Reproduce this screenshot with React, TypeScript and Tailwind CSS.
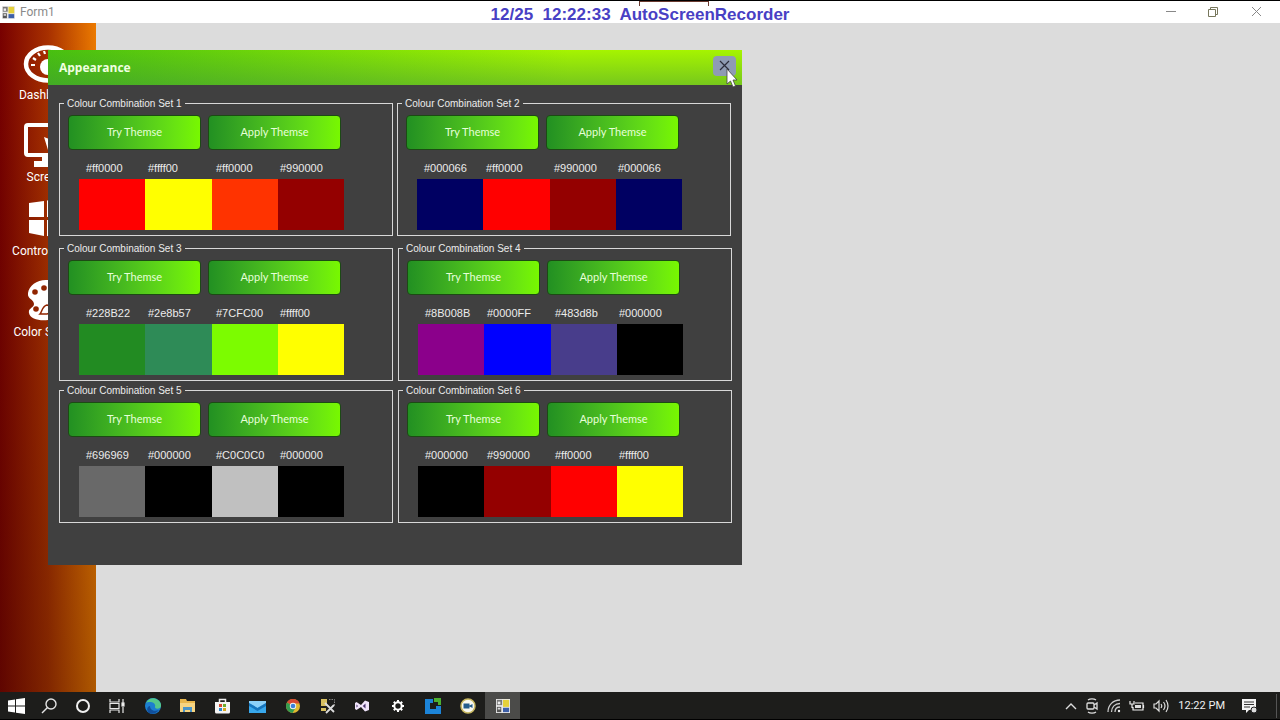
import type { ReactNode } from "react";

type ColourSet = {
  title: string;
  colours: { label: string; fill: string }[];
};

const ROWS: { className: string; sets: ColourSet[] }[] = [
  {
    className: "gap-1 mb-1 w-[672px]",
    sets: [
      {
        title: "Colour Combination Set 1",
        colours: [
          { label: "#ff0000", fill: "#ff0000" },
          { label: "#ffff00", fill: "#ffff00" },
          { label: "#ff0000", fill: "#ff3300" },
          { label: "#990000", fill: "#940000" },
        ],
      },
      {
        title: "Colour Combination Set 2",
        colours: [
          { label: "#000066", fill: "#000062" },
          { label: "#ff0000", fill: "#ff0000" },
          { label: "#990000", fill: "#940000" },
          { label: "#000066", fill: "#000062" },
        ],
      },
    ],
  },
  {
    className: "gap-[5px] mb-px w-[673px]",
    sets: [
      {
        title: "Colour Combination Set 3",
        colours: [
          { label: "#228B22", fill: "#228b22" },
          { label: "#2e8b57", fill: "#2e8b57" },
          { label: "#7CFC00", fill: "#7cfc00" },
          { label: "#ffff00", fill: "#ffff00" },
        ],
      },
      {
        title: "Colour Combination Set 4",
        colours: [
          { label: "#8B008B", fill: "#8b008b" },
          { label: "#0000FF", fill: "#0000ff" },
          { label: "#483d8b", fill: "#483d8b" },
          { label: "#000000", fill: "#000000" },
        ],
      },
    ],
  },
  {
    className: "gap-[5px] w-[673px]",
    sets: [
      {
        title: "Colour Combination Set 5",
        colours: [
          { label: "#696969", fill: "#696969" },
          { label: "#000000", fill: "#000000" },
          { label: "#C0C0C0", fill: "#c0c0c0" },
          { label: "#000000", fill: "#000000" },
        ],
      },
      {
        title: "Colour Combination Set 6",
        colours: [
          { label: "#000000", fill: "#000000" },
          { label: "#990000", fill: "#940000" },
          { label: "#ff0000", fill: "#ff0000" },
          { label: "#ffff00", fill: "#ffff00" },
        ],
      },
    ],
  },
];

function ThemeButton({ children }: { children: ReactNode }) {
  return (
    <button
      type="button"
      className="h-[35px] w-[133px] rounded border border-[#1c4a14] bg-linear-to-r from-[#229022] to-[#78f800] font-[Lato,sans-serif] text-[11px] text-[#e6ffd8]"
    >
      {children}
    </button>
  );
}

function ColourGroup({ set }: { set: ColourSet }) {
  return (
    <fieldset className="h-[141px] border border-[#d8d8d8] pl-2">
      <legend className="-ml-1 px-[3px] pt-0.5 text-[10px] leading-[14px]">
        {set.title}
      </legend>
      <div className="mt-1 flex gap-[7px]">
        <ThemeButton>Try Themse</ThemeButton>
        <ThemeButton>Apply Themse</ThemeButton>
      </div>
      <div className="ml-[11px] mt-[11px] grid grid-cols-[62px_68px_64px_1fr] pl-[7px] text-[11px] leading-[14px]">
        {set.colours.map((c, i) => (
          <span key={i}>{c.label}</span>
        ))}
      </div>
      <div className="ml-[11px] mt-1 grid h-[51px] w-[265px] grid-cols-4">
        {set.colours.map((c, i) => (
          <div key={i} style={{ backgroundColor: c.fill }} />
        ))}
      </div>
    </fieldset>
  );
}

function FormIcon({ size }: { size: number }) {
  return (
    <svg width={size} height={size} viewBox="0 0 16 16">
      <rect width="16" height="16" fill="#e8e8e8" />
      <rect x="1" y="1" width="6" height="6" fill="#777" />
      <rect x="2" y="3" width="3" height="3" fill="#eee" />
      <rect x="8" y="1" width="7" height="8" fill="#e4d03a" />
      <rect x="1" y="9" width="5" height="6" fill="#555" />
      <rect x="2" y="10" width="3" height="2" fill="#ddd" />
      <rect x="8" y="10" width="7" height="5" fill="#3d5fa8" />
    </svg>
  );
}

function Sidebar() {
  return (
    <nav className="flex w-24 shrink-0 flex-col items-center bg-[linear-gradient(to_bottom,transparent,#28100050),linear-gradient(to_right,#780000,#a83000_50%,#ec7a00)] font-[Roboto,sans-serif] text-[12px] leading-4 text-white">
      <a href="#dashboard" className="mt-[22px] flex flex-col items-center gap-1">
        <svg width="50" height="38" viewBox="0 0 50 38" fill="none" stroke="#fff">
          <ellipse cx="25" cy="19" rx="22" ry="16.500" strokeWidth="4.500" />
          <path d="M8 20h4M10 13l3 2M15 8l2 3M21 6l1 3M33 7l-2 4M39 12l-4 2" strokeWidth="2.200" />
          <circle cx="25" cy="22" r="8" fill="#fff" stroke="none" />
          <path d="M25 22l9-10" strokeWidth="3" />
        </svg>
        Dashboard
      </a>
      <a href="#screens" className="mt-5 flex flex-col items-center gap-px">
        <svg width="48" height="45" viewBox="0 0 48 45">
          <rect x="2" y="2" width="44" height="30" rx="2" fill="none" stroke="#fff" strokeWidth="4" />
          <path d="M18 32h12v6h4v6H10v-6h8z" fill="#fff" />
          <path d="M20 14l13 5-6 2-3 6z" fill="#fff" />
        </svg>
        Screens
      </a>
      <a href="#control-panel" className="mt-3.5 flex flex-col items-center gap-1.5">
        <svg width="38" height="38" viewBox="0 0 38 38" fill="#fff">
          <path d="M0 4l15-2v16H0zM18 1.500l20-2v18.500H18zM0 21h15v16L0 34zM18 21h20v19l-20-3z" />
        </svg>
        Control Panel
      </a>
      <a href="#color-setting" className="mt-5 flex flex-col items-center gap-[3px]">
        <svg width="40" height="42" viewBox="0 0 40 42">
          <path
            d="M20 1C10 0 1 6 0 14c-1 6 6 6 6 11 0 4-6 4-5 9 1 6 10 8 19 7 12-1 20-10 20-21C40 9 31 1 20 1z"
            fill="#fff"
          />
          <g fill="#902400">
            <circle cx="7" cy="13" r="2.800" />
            <circle cx="16" cy="9" r="2.800" />
            <circle cx="26" cy="10" r="2.800" />
            <circle cx="8" cy="30" r="2.800" />
          </g>
          <path d="M12 35c2-2 2-8 7-9 5 1 5 8 0 9z" fill="none" stroke="#902400" strokeWidth="1.500" />
        </svg>
        Color Setting
      </a>
    </nav>
  );
}

function TitleBar() {
  return (
    <header className="grid h-[23px] grid-cols-[1fr_auto_1fr] items-center border-t border-black bg-white">
      <div className="flex items-center gap-[5px] pl-0.5 font-[Roboto,sans-serif] text-[12px] leading-4 text-[#8a8a8a]">
        <FormIcon size={13} />
        Form1
      </div>
      <p className="relative whitespace-pre px-1 pt-1.5 font-['Liberation_Sans',sans-serif] text-[17px] font-bold leading-4 text-[#4840c4]">
        <span className="absolute left-[152px] top-0 h-[5px] w-[70px] border-x border-t border-[#6b3a30]" />
        12/25  12:22:33  AutoScreenRecorder
      </p>
      <div className="flex justify-end pr-0.5 text-[#888]">
        <button type="button" aria-label="Minimize" className="flex w-[43px] justify-center">
          <svg width="11" height="11" stroke="currentColor">
            <path d="M1 4.500h10" />
          </svg>
        </button>
        <button type="button" aria-label="Restore" className="flex w-[43px] justify-center text-[#77775c]">
          <svg width="11" height="11" fill="none" stroke="currentColor">
            <path d="M.5 2.500h7v7h-7zM2.500 2.500v-2h7v7h-2" />
          </svg>
        </button>
        <button type="button" aria-label="Close" className="flex w-[43px] justify-center">
          <svg width="11" height="11" stroke="currentColor">
            <path d="M1 0l9 9M10 0l-9 9" />
          </svg>
        </button>
      </div>
    </header>
  );
}

function AppearanceDialog() {
  return (
    <section
      role="dialog"
      aria-labelledby="appearance-title"
      className="absolute left-12 top-[27px] h-[515px] w-[694px] bg-[#404040] font-['Liberation_Sans',sans-serif] text-[#ececec]"
    >
      <div className="flex h-[35px] items-center justify-between bg-[linear-gradient(to_bottom,transparent,#3a904070),linear-gradient(to_right,#48c010,#a6f400_75%)] pl-[11px] pr-1.5">
        <h1 id="appearance-title" className="font-['Open_Sans',sans-serif] text-[12px] font-bold text-[#f0ffe0]">
          Appearance
        </h1>
        <button
          type="button"
          aria-label="Close appearance"
          className="mb-1 flex h-5 w-[23px] items-center justify-center rounded bg-[#8f9bb4]"
        >
          <svg width="11" height="11" stroke="#2c2c3c" strokeWidth="1.200">
            <path d="M1 1l9 9M10 1l-9 9" />
          </svg>
        </button>
      </div>
      <div className="pl-[11px] pt-2.5">
        {ROWS.map((row, i) => (
          <div key={i} className={`grid grid-cols-2 ${row.className}`}>
            {row.sets.map((set) => (
              <ColourGroup key={set.title} set={set} />
            ))}
          </div>
        ))}
      </div>
      {/* mouse pointer */}
      <svg className="absolute right-1 top-[18px]" width="12" height="20" viewBox="0 0 12 20">
        <path d="M1 1v15l3.500-3 2.500 6 2.500-1-2.500-6H11z" fill="#fff" stroke="#444" strokeWidth=".8" />
      </svg>
    </section>
  );
}

const APPS: { name: string; icon: ReactNode }[] = [
  {
    name: "Edge",
    icon: (
      <svg width="16" height="16" viewBox="0 0 16 16">
        <circle cx="8" cy="8" r="8" fill="#1c7fd0" />
        <path d="M1 5C3 0 9-1 13 2c3 2 4 6 2 8-2 1-5 1-5-1 1-3-2-5-5-5-2 0-3 0-4 1z" fill="#54c88c" />
        <path d="M5 8c0 4 4 6 9 4-3 4-8 5-11 2-2-3 0-6 2-6z" fill="#104f9c" />
      </svg>
    ),
  },
  {
    name: "File Explorer",
    icon: (
      <svg width="17" height="15" viewBox="0 0 17 15">
        <path d="M1 1h6l1 2h8v11H1z" fill="#e8b64c" />
        <path d="M1 5h15v9H1z" fill="#f6d482" />
        <path d="M4 9h9v5h-2v-2H6v2H4z" fill="#4a94c8" />
      </svg>
    ),
  },
  {
    name: "Microsoft Store",
    icon: (
      <svg width="15" height="16" viewBox="0 0 15 16">
        <path d="M4.500 5V1.500h6V5" fill="none" stroke="#eee" strokeWidth="1.500" />
        <path d="M0 4h15v10a1.500 1.500 0 01-1.500 1.500h-12A1.500 1.500 0 010 14z" fill="#f4f4f4" />
        <rect x="4" y="6" width="3" height="3" fill="#d8482c" />
        <rect x="8" y="6" width="3" height="3" fill="#6cac2c" />
        <rect x="4" y="10" width="3" height="3" fill="#2c88cc" />
        <rect x="8" y="10" width="3" height="3" fill="#d8a820" />
      </svg>
    ),
  },
  {
    name: "Mail",
    icon: (
      <svg width="17" height="14" viewBox="0 0 17 14">
        <path d="M0 2h17v12H0z" fill="#38a8ec" />
        <path d="M0 2h17v2l-8.500 5L0 4z" fill="#8cd0f8" />
        <path d="M0 4l8.500 5L17 4v3l-8.500 5L0 7z" fill="#1674bc" />
      </svg>
    ),
  },
  {
    name: "Chrome",
    icon: (
      <svg width="14" height="14" viewBox="0 0 14 14">
        <circle cx="7" cy="7" r="7" fill="#e0b830" />
        <path d="M7 7L1 3.500A7 7 0 0113.500 4.500H7z" fill="#d84834" />
        <path d="M7 7L1 3.500A7 7 0 006.500 14L10 8z" fill="#349c50" />
        <circle cx="7" cy="7" r="3.200" fill="#f4f4f4" />
        <circle cx="7" cy="7" r="2.300" fill="#3c80dc" />
      </svg>
    ),
  },
  {
    name: "Snipping tools",
    icon: (
      <svg width="16" height="16" viewBox="0 0 16 16" fill="none">
        <path d="M1 1h6v7H1zM1 10h5v3H1z" fill="#d8c060" />
        <path d="M9 1.500h5.500V8" stroke="#888" strokeDasharray="1.500 1" />
        <path d="M5 5l9 9M14 7l-8 8" stroke="#ddd" strokeWidth="1.800" />
      </svg>
    ),
  },
  {
    name: "Visual Studio",
    icon: (
      <svg width="15" height="14" viewBox="0 0 15 14">
        <path d="M0 4l1.500-1L6 6l4-4.500L14 3v8l-4 1.500L6 8l-4.500 3L0 10z" fill="#f0e4fa" />
        <path d="M10.500 4.500v5L7.800 7zM1.500 5.500v3L3 7z" fill="#47306a" />
      </svg>
    ),
  },
  {
    name: "Settings",
    icon: (
      <svg width="14" height="14" viewBox="0 0 14 14" fill="none" stroke="#fff">
        <circle cx="7" cy="7" r="3.700" strokeWidth="2" />
        <path
          d="M7 1v2M7 11v2M1 7h2M11 7h2M2.800 2.800l1.400 1.400M9.800 9.800l1.400 1.400M11.200 2.800L9.800 4.200M4.200 9.800l-1.400 1.400"
          strokeWidth="2"
        />
      </svg>
    ),
  },
  {
    name: "CL",
    icon: (
      <svg width="16" height="16" viewBox="0 0 16 16">
        <path d="M0 1h8v4H5v6h6V8h5v8H0z" fill="#1c84d8" />
        <path d="M9 0h7v7h-3V4H9z" fill="#4cb030" />
      </svg>
    ),
  },
  {
    name: "Screen Recorder",
    icon: (
      <svg width="16" height="16" viewBox="0 0 16 16">
        <circle cx="8" cy="8" r="7" fill="#f8f8f0" stroke="#c8b860" strokeWidth="1.500" />
        <path d="M3.500 5.500h6v2l3-1.500v4l-3-1.500v2h-6z" fill="#245c8c" />
      </svg>
    ),
  },
];

function Taskbar() {
  return (
    <footer className="flex h-7 items-stretch border-b border-black bg-[#1d1d1b] text-white">
      <button type="button" aria-label="Start" className="flex w-8 items-center justify-center">
        <svg width="17" height="16" viewBox="0 0 17 16" fill="#fff">
          <path d="M0 2.500l7-1v6H0zM8 1.300L17 0v7.500H8zM0 8.500h7v6l-7-1zM8 8.500h9V16l-9-1.300z" />
        </svg>
      </button>
      <button type="button" aria-label="Search" className="flex w-[34px] items-center justify-center">
        <svg width="16" height="16" viewBox="0 0 16 16" fill="none" stroke="#e4e4e4" strokeWidth="1.400">
          <circle cx="10" cy="6" r="5" />
          <path d="M6.500 9.500L1 15" />
        </svg>
      </button>
      <button type="button" aria-label="Cortana" className="flex w-[34px] items-center justify-center">
        <svg width="16" height="16" viewBox="0 0 16 16">
          <circle cx="8" cy="8" r="6" fill="none" stroke="#f0f0f0" strokeWidth="2" />
        </svg>
      </button>
      <button type="button" aria-label="Task view" className="flex w-[34px] items-center justify-center">
        <svg width="16" height="16" viewBox="0 0 16 16" fill="none" stroke="#e8e8e8" strokeWidth="1.200">
          <path d="M1 1v3h9V1M1 15v-3h9v3M1 5.500h9v5H1zM14 1v4M14 9v6" />
          <rect x="13" y="5" width="2" height="3" fill="#fff" />
        </svg>
      </button>
      <div className="ml-px flex">
        {APPS.map((app) => (
          <button
            key={app.name}
            type="button"
            aria-label={app.name}
            className="flex w-[35px] items-center justify-center"
          >
            {app.icon}
          </button>
        ))}
        <button type="button" aria-label="Form1" className="flex w-[35px] items-center justify-center bg-[#4b4b49]">
          <FormIcon size={14} />
        </button>
      </div>

      {/* tray */}
      <div className="ml-auto flex items-center gap-2">
        <svg width="12" height="8" fill="none" stroke="#ddd" strokeWidth="1.400">
          <path d="M1 7l5-5 5 5" />
        </svg>
        <svg width="14" height="16" viewBox="0 0 14 16" fill="none" stroke="#ddd" strokeWidth="1.300">
          <rect x="2" y="5" width="7" height="6" rx="1" />
          <path d="M9 7l3-2v6l-3-2M3 2c2-1.500 6-1.500 8 0M3 14c2 1.500 6 1.500 8 0" />
        </svg>
        <svg width="14" height="14" viewBox="0 0 14 14" fill="none" stroke="#ccc" strokeWidth="1.300">
          <path d="M1 13C1 6 6 1 13 1M4.500 13c0-5 3.500-8.500 8.500-8.500M8 13c0-3 2-5 5-5" />
          <circle cx="12" cy="12" r="1.200" fill="#eee" stroke="none" />
        </svg>
        <svg width="16" height="12" viewBox="0 0 16 12" fill="none" stroke="#eee" strokeWidth="1.200">
          <path d="M6 3h8v7H4V7M14.500 5v3M1 1v3h4V1M3 4v4" />
          <rect x="6" y="5" width="6" height="3" fill="#ddd" stroke="none" />
        </svg>
        <svg width="16" height="14" viewBox="0 0 16 14" fill="none" stroke="#ddd" strokeWidth="1.200">
          <path d="M1 5h2l3-3v10L3 9H1zM8 5q1.500 2 0 4M10.500 3q3 4 0 8M13 1q4 6 0 12" />
        </svg>
        <time className="whitespace-nowrap pl-px font-[Roboto,sans-serif] text-[11px] leading-4 text-[#f0f0f0]">
          12:22 PM
        </time>
        <button type="button" aria-label="Notifications" className="ml-2 mr-2.5">
          <svg width="17" height="16" viewBox="0 0 17 16">
            <path d="M1 1h14v11H8l-3 3v-3H1z" fill="#f4f4f4" />
            <path d="M3 4h10M3 6.500h10M3 9h6" stroke="#333" />
            <circle cx="13" cy="12" r="3" fill="#ddd" stroke="#222" />
          </svg>
        </button>
        <span className="mr-[3px] h-6 w-px bg-[#555]" />
      </div>
    </footer>
  );
}

export default function App() {
  return (
    <div className="flex h-screen flex-col overflow-hidden bg-[#dcdcdc]">
      <TitleBar />
      <main className="relative flex flex-1">
        <Sidebar />
        <AppearanceDialog />
      </main>
      <Taskbar />
    </div>
  );
}
